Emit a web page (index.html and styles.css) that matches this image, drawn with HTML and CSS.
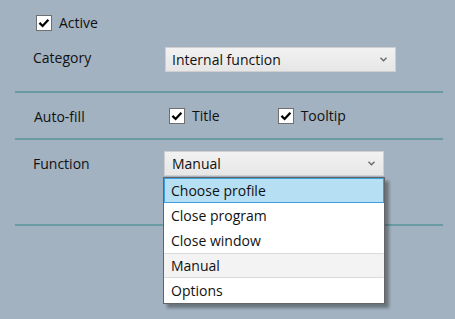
FILE: index.html
```html
<!DOCTYPE html>
<html lang="en">
<head>
    <meta charset="UTF-8">
    <title>Function settings</title>
    <link rel="stylesheet" href="styles.css">
</head>
<body>
    <div class="panel">
        <div class="check-row active-row">
            <span class="check">
                <svg viewBox="0 0 16 16" width="16" height="16"><path d="M2.8 7.8 L6.4 11.4 L13 4.2" fill="none" stroke="#000" stroke-width="2.6"/></svg>
            </span>
            <span class="check-label">Active</span>
        </div>

        <div class="field-row category-row">
            <div class="label">Category</div>
            <div class="combo category-combo">
                <span>Internal function</span>
                <svg class="chevron" viewBox="0 0 7 5" width="7" height="5"><path d="M0.5 0.8 L3.5 3.8 L6.5 0.8" fill="none" stroke="#666" stroke-width="1.3"/></svg>
            </div>
        </div>

        <div class="sep first-sep"></div>

        <div class="field-row autofill-row">
            <div class="label">Auto-fill</div>
            <div class="check-row">
                <span class="check">
                    <svg viewBox="0 0 16 16" width="16" height="16"><path d="M2.8 7.8 L6.4 11.4 L13 4.2" fill="none" stroke="#000" stroke-width="2.6"/></svg>
                </span>
                <span class="check-label">Title</span>
            </div>
            <div class="check-row tooltip-check">
                <span class="check">
                    <svg viewBox="0 0 16 16" width="16" height="16"><path d="M2.8 7.8 L6.4 11.4 L13 4.2" fill="none" stroke="#000" stroke-width="2.6"/></svg>
                </span>
                <span class="check-label">Tooltip</span>
            </div>
        </div>

        <div class="sep second-sep"></div>

        <div class="field-row function-row">
            <div class="label">Function</div>
            <div class="combo-wrap">
                <div class="combo function-combo">
                    <span>Manual</span>
                    <svg class="chevron" viewBox="0 0 7 5" width="7" height="5"><path d="M0.5 0.8 L3.5 3.8 L6.5 0.8" fill="none" stroke="#666" stroke-width="1.3"/></svg>
                </div>
                <ul class="dropdown">
                    <li class="item hover">Choose profile</li>
                    <li class="item">Close program</li>
                    <li class="item">Close window</li>
                    <li class="item selected">Manual</li>
                    <li class="item">Options</li>
                </ul>
            </div>
        </div>

        <div class="sep third-sep"></div>
    </div>
</body>
</html>
```

FILE: styles.css
```css
:root {
    --bg: #a2b2c1;
    --line: #6a9aa2;
    --text: #111;
}

* {
    margin: 0;
    padding: 0;
    box-sizing: border-box;
}

body {
    background: var(--bg);
    color: var(--text);
    font-family: 'Open Sans', 'Noto Sans', sans-serif;
    font-size: 14px;
    width: 455px;
    height: 319px;
    overflow: hidden;
}

.panel {
    padding-left: 15px;
    width: 443px;
}

.check-row {
    display: flex;
    align-items: center;
    height: 16px;
}

.active-row {
    margin-top: 15px;
    margin-left: 21px;
}

.check {
    width: 16px;
    height: 16px;
    background: #fff;
    border: 1px solid #6f6f6f;
    display: flex;
    align-items: center;
    justify-content: center;
}

.check svg {
    display: block;
}

.check-label {
    margin-left: 7px;
    line-height: 16px;
}

.field-row {
    display: flex;
    align-items: center;
}

.label {
    width: 150px;
    padding-left: 18px;
    flex-shrink: 0;
}

.category-row {
    margin-top: 16px;
    height: 25px;
}

.category-row .label {
    margin-top: -5px;
}

.combo {
    height: 25px;
    display: flex;
    align-items: center;
    justify-content: space-between;
    background: linear-gradient(#f2f2f2, #e6e6e6);
    border: 1px solid #cfcfcf;
    padding: 0 8px 0 6px;
}

.category-combo {
    width: 231px;
}

.sep {
    height: 2px;
    background: var(--line);
}

.first-sep {
    margin-top: 19px;
}

.autofill-row {
    margin-top: 15px;
    height: 16px;
}

.autofill-row .label {
    width: 154px;
    padding-left: 19px;
}

.tooltip-check {
    margin-left: 58px;
}

.second-sep {
    margin-top: 14px;
}

.function-row {
    margin-top: 11px;
    height: 25px;
}

.function-row .label {
    width: 149px;
}

.combo-wrap {
    position: relative;
}

.function-combo {
    width: 220px;
    padding-left: 7px;
}

.dropdown {
    position: absolute;
    top: 26px;
    left: -1px;
    width: 222px;
    list-style: none;
    background: #fff;
    border: 1px solid #646464;
    box-shadow: 4px 4px 3px rgba(0, 0, 0, 0.35);
    z-index: 2;
}

.item {
    height: 25px;
    line-height: 23px;
    padding-left: 6px;
    border: 1px solid transparent;
}

.item.hover {
    background: #b7dff3;
    border-color: #3f9fdc;
}

.item.selected {
    background: #f3f3f3;
    border-color: #dadada transparent;
}

.third-sep {
    margin-top: 48px;
}
```
